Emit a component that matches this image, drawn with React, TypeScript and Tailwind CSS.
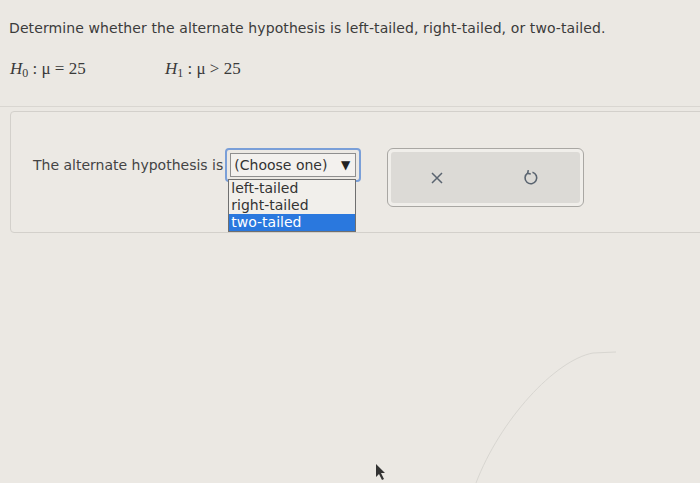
import React from "react";

export default function App() {
  const font = { fontFamily: '"DejaVu Sans", Verdana, sans-serif' };
  return (
    <div className="relative w-[700px] h-[483px] overflow-hidden bg-[#ebe8e3] text-[#3b3b3b]" style={font}>
      <div className="pt-[19px] pl-[9px] text-[14px] leading-[18px] tracking-[0.1px]">
        Determine whether the alternate hypothesis is left-tailed, right-tailed, or two-tailed.
      </div>
      <div className="flex mt-[21px] pl-[10px] text-[17px] leading-[22px] text-[#3a3a3a]" style={{ fontFamily: '"Liberation Serif", "Times New Roman", serif' }}>
        <div className="w-[155px]">
          <i>H</i><sub className="text-[12px]">0</sub> : μ = 25
        </div>
        <div>
          <i>H</i><sub className="text-[12px]">1</sub> : μ &gt; 25
        </div>
      </div>
      <div className="mt-[26px] h-px bg-[#d9d6d1]" />
      <div className="ml-[10px] mt-[4px] h-[122px] w-[720px] rounded-[4px] border border-[#d3d0cb] bg-[#ece9e4] flex items-start pt-[36px]">
        <div className="flex items-start">
          <div className="pl-[22px] pt-[8px] text-[14px] leading-[18px] text-[#444]">The alternate hypothesis is</div>
          <div className="ml-[2px] flex flex-col">
            <div className="rounded-[4px] border-[2px] border-[#7a9fd8] p-[3px] w-[136px]">
              <div className="h-[24px] border border-[#8f8f8f] bg-[#f3f1ee] flex items-center justify-between pl-[3px] pr-[5px] text-[14px] text-[#333]">
                <span>(Choose one)</span>
                <span className="text-[12px] text-[#222]">▼</span>
              </div>
            </div>
            <div className="ml-[3px] -mt-[3px] w-[128px] border border-[#6f6f6f] bg-[#f1efeb] text-[14px] leading-[17px] text-[#333]">
              <div className="pl-[2px]">left-tailed</div>
              <div className="pl-[2px]">right-tailed</div>
              <div className="pl-[2px] bg-[#2a78de] text-white">two-tailed</div>
            </div>
          </div>
          <div className="ml-[26px] w-[197px] h-[59px] rounded-[6px] border border-[#a9a7a3] bg-[#f0eeea] p-[3px]">
            <div className="h-full rounded-[3px] bg-[#dcdad6] flex items-center pl-[39px]">
              <svg width="14" height="14" viewBox="0 0 14 14">
                <path d="M2 2 L12 12 M12 2 L2 12" stroke="#5a6470" strokeWidth="1.5" fill="none" />
              </svg>
              <svg width="18" height="18" viewBox="0 0 16 16" className="ml-[78px]">
                <path d="M5 3.6 A5.2 5.2 0 1 0 9.3 2.9" stroke="#5a6470" strokeWidth="1.4" fill="none" />
                <path d="M5.6 1 L5 3.8 L7.8 4.4" stroke="#5a6470" strokeWidth="1.4" fill="none" />
              </svg>
            </div>
          </div>
        </div>
      </div>
      <svg className="absolute left-0 top-0 pointer-events-none" width="700" height="483">
        <path d="M616 352 L593 353 C555 360 500 420 476 483" stroke="#d8d6d1" strokeWidth="1" fill="none" />
        <path d="M376 464 L376 477 L379 474 L382 480 L384 479 L381 473 L385 473 Z" fill="#333" />
      </svg>
    </div>
  );
}
